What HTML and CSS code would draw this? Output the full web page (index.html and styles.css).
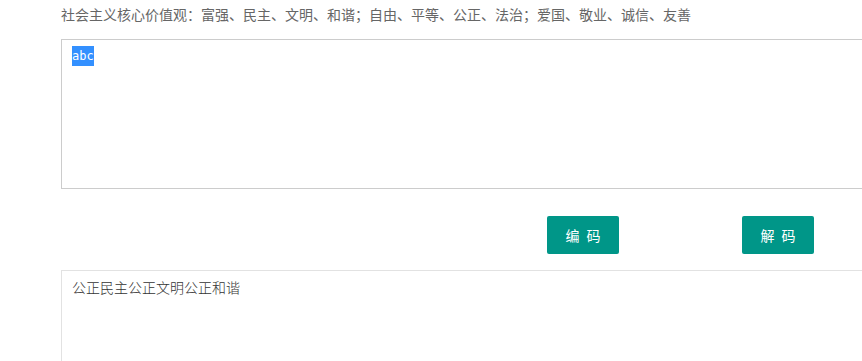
FILE: index.html
```html
<!DOCTYPE html>
<html lang="zh-CN">
<head>
  <meta charset="UTF-8" />
  <meta name="viewport" content="width=device-width, initial-scale=1.0"/>
  <title>核心价值观编码</title>
  <link rel="stylesheet" href="styles.css">
</head>
<body>

<div class="container">
  <p class="tip">社会主义核心价值观：富强、民主、文明、和谐；自由、平等、公正、法治；爱国、敬业、诚信、友善</p>

  <div class="box box-input"><span class="selected">abc</span></div>

  <div class="actions">
    <button type="button" class="btn btn-encode">编 码</button>
    <button type="button" class="btn btn-decode">解 码</button>
  </div>

  <div class="box box-output">公正民主公正文明公正和谐</div>
</div>

</body>
</html>
```

FILE: styles.css
```css
body {
  margin: 0;
  background: #fff;
  font-family: "Noto Sans CJK SC", "Microsoft YaHei", sans-serif;
  overflow: hidden;
}

.container {
  padding-left: 61px;
  width: 830px;
}

.tip {
  margin: 0;
  padding-top: 4px;
  height: 35px;
  font-size: 14px;
  line-height: 20px;
  color: #666;
  white-space: nowrap;
}

.box {
  box-sizing: border-box;
  height: 150px;
  padding: 6px 10px;
  border: 1px solid #ccc;
  line-height: 20px;
  font-size: 14px;
  color: #333;
  background: #fff;
}

.box-input {
  font-family: "DejaVu Sans Mono", "Liberation Mono", monospace;
  font-size: 12px;
}

.box-output {
  border-color: #e2e2e2;
  font-weight: 300;
}

.selected {
  display: inline-block;
  background: #3390ff;
  color: #fff;
  line-height: 20px;
}

.actions {
  display: flex;
  padding: 27px 0 16px 486px;
  gap: 123px;
}

.btn {
  width: 72px;
  height: 38px;
  padding: 0;
  border: none;
  border-radius: 2px;
  background-color: #009688;
  color: #fff;
  font-family: "Noto Sans CJK SC", "Microsoft YaHei", sans-serif;
  font-size: 14px;
  word-spacing: 4px;
  cursor: pointer;
}
```
